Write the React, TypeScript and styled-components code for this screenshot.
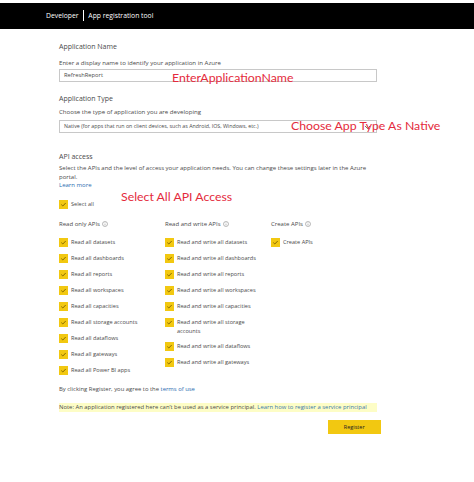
import * as React from 'react'
import styled, { createGlobalStyle } from 'styled-components'

const readOnlyApis = [
  'Read all datasets',
  'Read all dashboards',
  'Read all reports',
  'Read all workspaces',
  'Read all capacities',
  'Read all storage accounts',
  'Read all dataflows',
  'Read all gateways',
  'Read all Power BI apps',
]

const readWriteApis = [
  'Read and write all datasets',
  'Read and write all dashboards',
  'Read and write all reports',
  'Read and write all workspaces',
  'Read and write all capacities',
  'Read and write all storage accounts',
  'Read and write all dataflows',
  'Read and write all gateways',
]

const createApis = ['Create APIs']

const columns = [
  { title: 'Read only APIs', items: readOnlyApis },
  { title: 'Read and write APIs', items: readWriteApis },
  { title: 'Create APIs', items: createApis },
]

const CheckMark = () => (
  <CheckBox>
    <svg width="9" height="9" viewBox="0 0 9 9">
      <polyline points="2.3,4.6 3.8,6 6.7,3" fill="none" stroke="#7a5f00" strokeWidth="0.9" />
    </svg>
  </CheckBox>
)

const InfoIcon = () => (
  <svg width="6" height="6" viewBox="0 0 6 6">
    <circle cx="3" cy="3" r="2.5" fill="none" stroke="#777" strokeWidth="0.5" />
    <line x1="3" y1="2.6" x2="3" y2="4.4" stroke="#777" strokeWidth="0.5" />
    <circle cx="3" cy="1.7" r="0.3" fill="#777" />
  </svg>
)

const Chevron = () => (
  <ChevronWrap>
    <svg width="7" height="5" viewBox="0 0 7 5">
      <polyline points="1,1 3.5,3.5 6,1" fill="none" stroke="#555" strokeWidth="0.8" />
    </svg>
  </ChevronWrap>
)

export default function App() {
  return (
    <Page>
      <GlobalStyle />
      <Header>
        <Brand>Developer</Brand>
        <Divider />
        <Brand>App registration tool</Brand>
      </Header>

      <Form>
        <Label top={13}>Application Name</Label>
        <Help top={7}>Enter a display name to identify your application in Azure</Help>
        <Field top={2}>
          <FieldText size={5.8}>RefreshReport</FieldText>
          <Annotation left={112} top={0}>EnterApplicationName</Annotation>
        </Field>

        <Label top={12}>Application Type</Label>
        <Help top={4}>Choose the type of application you are developing</Help>
        <Field top={3.5}>
          <FieldText size={5.3}>
            Native (for apps that run on client devices, such as Android, IOS, Windows, etc.)
          </FieldText>
          <Chevron />
          <Annotation left={231} top={-2.5}>Choose App Type As Native</Annotation>
        </Field>

        <Label top={18.5}>API access</Label>
        <Paragraph>
          Select the APIs and the level of access your application needs. You can change these settings later in the Azure
          <br />
          portal.
          <br />
          <Link>Learn more</Link>
        </Paragraph>

        <SelectAllRow>
          <CheckMark />
          <ItemText>Select all</ItemText>
          <Annotation left={62} top={-11}>Select All API Access</Annotation>
        </SelectAllRow>

        <Columns>
          {columns.map(column => (
            <Column key={column.title}>
              <ColumnTitle>
                {column.title} <InfoIcon />
              </ColumnTitle>
              {column.items.map(item => (
                <Item key={item}>
                  <CheckMark />
                  <ItemText>{item}</ItemText>
                </Item>
              ))}
            </Column>
          ))}
        </Columns>

        <Terms>
          By clicking Register, you agree to the <Link>terms of use</Link>
        </Terms>

        <Note>
          Note: An application registered here can’t be used as a service principal.{' '}
          <NoteLink>Learn how to register a service principal</NoteLink>
        </Note>

        <Actions>
          <RegisterButton>Register</RegisterButton>
        </Actions>
      </Form>
    </Page>
  )
}

const GlobalStyle = createGlobalStyle`
  html, body {
    margin: 0;
    padding: 0;
    background: #fff;
  }
  body {
    font-family: "Open Sans", "Noto Sans", sans-serif;
    color: #4a4a4a;
  }
`

const Page = styled.div`
  width: 474px;
  min-height: 482px;
  padding-top: 3px;
  box-sizing: border-box;
`

const Header = styled.div`
  height: 25.5px;
  background: #000;
  display: flex;
  align-items: center;
  padding-left: 46px;
`

const Brand = styled.span`
  color: #fff;
  font-size: 6.8px;
  line-height: 10px;
`

const Divider = styled.span`
  width: 0.8px;
  height: 11px;
  background: #fff;
  margin: 0 5px 0 4px;
`

const Form = styled.div`
  position: relative;
  width: 318px;
  margin-left: 59px;
  display: flex;
  flex-direction: column;
`

const Label = styled.div<{ top: number }>`
  margin-top: ${p => p.top}px;
  font-size: 7px;
  line-height: 10px;
  color: #4a4a4a;
`

const Help = styled.div<{ top: number }>`
  margin-top: ${p => p.top}px;
  font-size: 6.1px;
  line-height: 8px;
  color: #4a4a4a;
`

const Field = styled.div<{ top: number }>`
  position: relative;
  margin-top: ${p => p.top}px;
  height: 13.5px;
  border: 0.8px solid #c8c8c8;
  box-sizing: border-box;
  padding-left: 4px;
  display: flex;
  align-items: center;
  white-space: nowrap;
`

const FieldText = styled.span<{ size: number }>`
  font-size: ${p => p.size}px;
  color: #4a4a4a;
`

const ChevronWrap = styled.span`
  position: absolute;
  right: 5px;
  top: 4.5px;
  display: flex;
`

const Annotation = styled.span<{ left: number; top: number }>`
  position: absolute;
  left: ${p => p.left}px;
  top: ${p => p.top}px;
  font-family: Lato, "Open Sans", sans-serif;
  font-size: 12.3px;
  line-height: 15px;
  color: #e42a3c;
  white-space: nowrap;
`

const Paragraph = styled.div`
  margin-top: 2.5px;
  font-size: 6px;
  line-height: 8.5px;
  color: #4a4a4a;
  white-space: nowrap;
`

const Link = styled.span`
  color: #2b6cb0;
`

const SelectAllRow = styled.div`
  position: relative;
  margin-top: 10px;
  display: flex;
  align-items: center;
  gap: 3px;
`

const CheckBox = styled.span`
  flex: none;
  width: 9px;
  height: 9px;
  background: #f2c811;
  display: flex;
`

const ItemText = styled.span`
  font-size: 5.6px;
  line-height: 8.5px;
  color: #4a4a4a;
`

const Columns = styled.div`
  margin-top: 10px;
  display: grid;
  grid-template-columns: 106px 106px 106px;
`

const Column = styled.div`
  display: flex;
  flex-direction: column;
  gap: 7px;
`

const ColumnTitle = styled.div`
  font-size: 6px;
  line-height: 10px;
  color: #4a4a4a;
  margin-bottom: 2.5px;
  display: flex;
  align-items: center;
  gap: 2px;
`

const Item = styled.div`
  display: flex;
  align-items: flex-start;
  gap: 3px;
  padding-right: 12px;
`

const Terms = styled.div`
  margin-top: 10px;
  font-size: 5.9px;
  line-height: 8.5px;
  color: #4a4a4a;
`

const Note = styled.div`
  margin-top: 9.5px;
  height: 9px;
  background: #fdfdc6;
  font-size: 5.9px;
  line-height: 9px;
  color: #4a4a4a;
  white-space: nowrap;
`

const NoteLink = styled.span`
  color: #3b7aa8;
`

const Actions = styled.div`
  display: flex;
  justify-content: flex-end;
  margin-top: 8px;
  margin-right: -4px;
`

const RegisterButton = styled.button`
  width: 53.5px;
  height: 14.3px;
  background: #f2c811;
  border: none;
  padding: 0;
  font-family: "Open Sans", sans-serif;
  font-size: 5.5px;
  color: #222;
`
